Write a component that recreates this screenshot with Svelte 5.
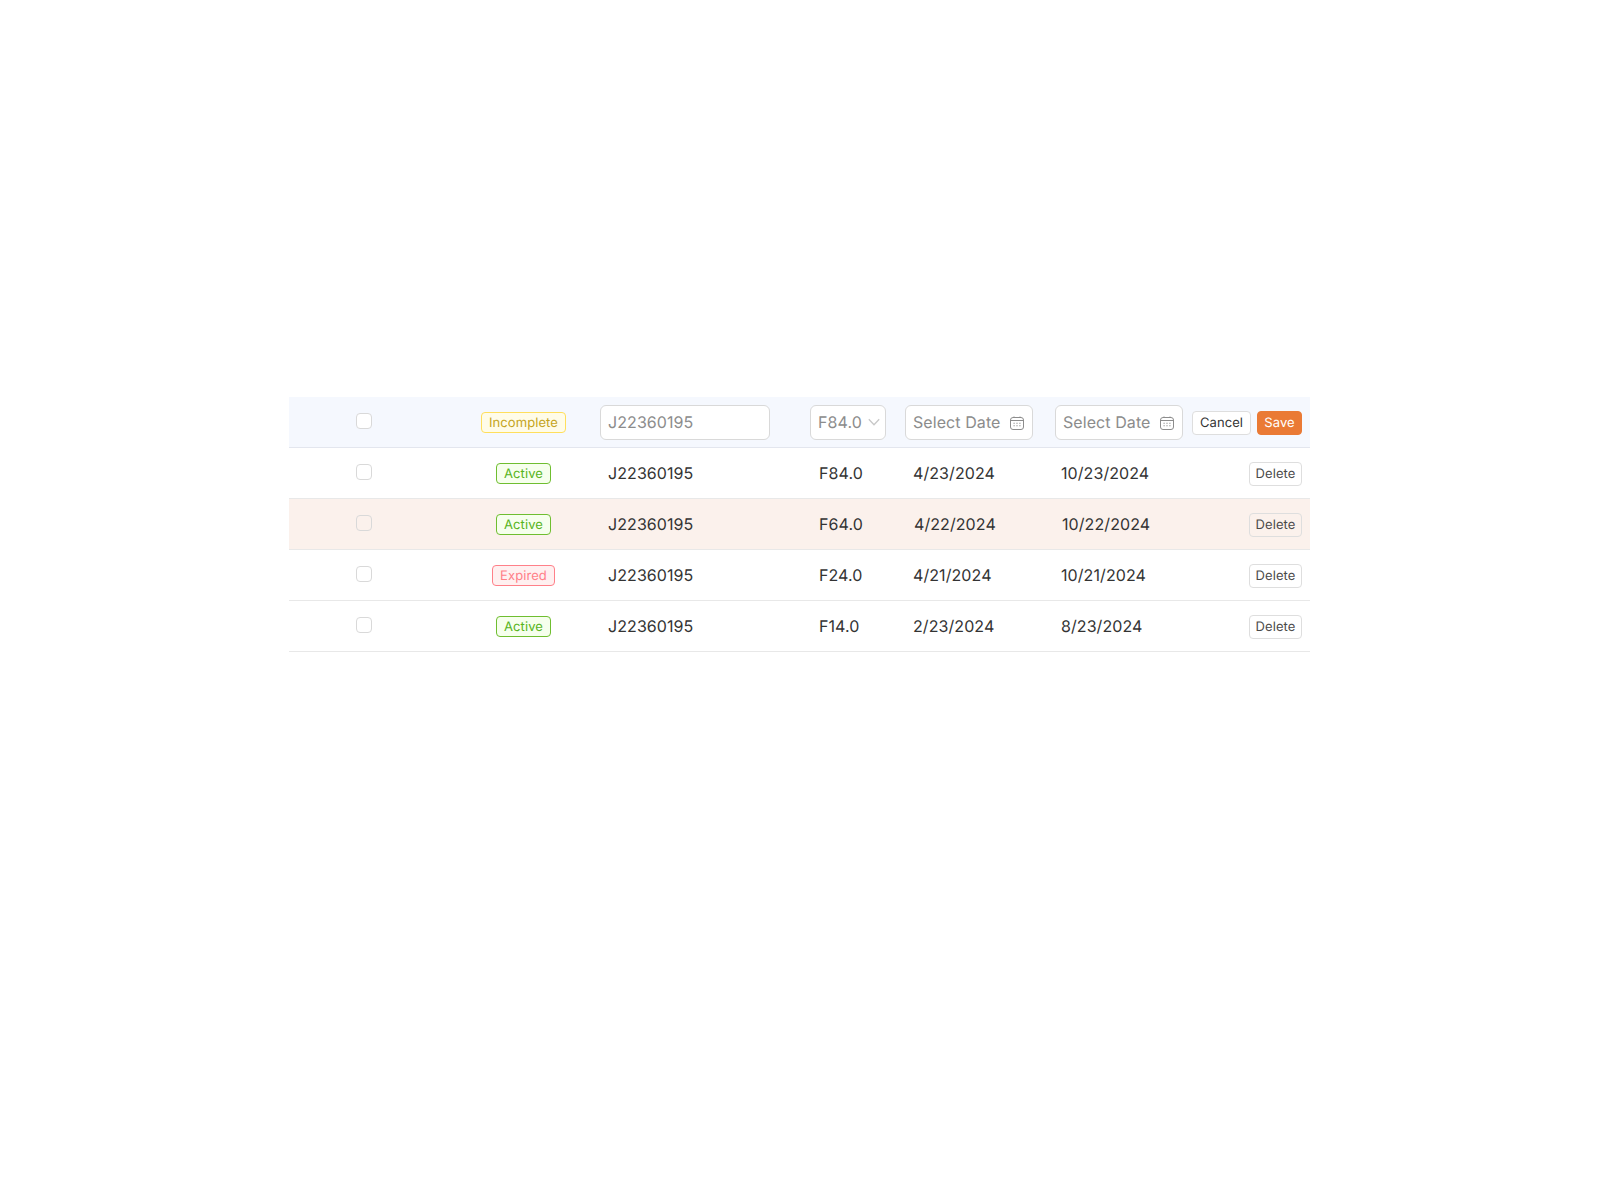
<script>
  const rows = [
    { status: 'Active', code: 'J22360195', grade: 'F84.0', start: '4/23/2024', end: '10/23/2024' },
    { status: 'Active', code: 'J22360195', grade: 'F64.0', start: '4/22/2024', end: '10/22/2024', hover: true },
    { status: 'Expired', code: 'J22360195', grade: 'F24.0', start: '4/21/2024', end: '10/21/2024' },
    { status: 'Active', code: 'J22360195', grade: 'F14.0', start: '2/23/2024', end: '8/23/2024' }
  ];
</script>

{#snippet calendar()}
  <svg class="cal" width="16" height="16" viewBox="0 0 16 16" fill="none" stroke="#8c8c8c" stroke-width="1">
    <rect x="1.5" y="2.5" width="13" height="12" rx="2.5" />
    <path d="M1.5 5.5h13M5 1.5v1M11 1.5v1" />
    <path d="M4.5 8.2h1.2M7.4 8.2h1.2M10.3 8.2h1.2M4.5 10.8h1.2M7.4 10.8h1.2M10.3 10.8h1.2" stroke-width="1.1" />
  </svg>
{/snippet}

<div class="table">
  <div class="row editing">
    <div class="cell"><span class="check"></span></div>
    <div class="cell center"><span class="badge incomplete">Incomplete</span></div>
    <div class="cell"><div class="field code">J22360195</div></div>
    <div class="cell">
      <div class="field grade">
        F84.0
        <svg width="12" height="12" viewBox="0 0 12 12" fill="none" stroke="#c8c8c8" stroke-width="1.3">
          <path d="M.8 3.2L6 8.8l5.2-5.6" />
        </svg>
      </div>
    </div>
    <div class="cell"><div class="field date">Select Date {@render calendar()}</div></div>
    <div class="cell"><div class="field date">Select Date {@render calendar()}</div></div>
    <div class="cell actions">
      <button class="btn cancel">Cancel</button>
      <button class="btn save">Save</button>
    </div>
  </div>

  {#each rows as row}
    <div class="row" class:hover={row.hover}>
      <div class="cell"><span class="check"></span></div>
      <div class="cell center">
        <span class="badge" class:active={row.status === 'Active'} class:expired={row.status === 'Expired'}>{row.status}</span>
      </div>
      <div class="cell text code-text">{row.code}</div>
      <div class="cell text grade-text">{row.grade}</div>
      <div class="cell text start-text">{row.start}</div>
      <div class="cell text end-text">{row.end}</div>
      <div class="cell actions"><button class="btn delete">Delete</button></div>
    </div>
  {/each}
</div>

<style>
  :global(body) {
    margin: 0;
    background: #fff;
  }

  .table {
    width: 1021px;
    margin: 397px 0 0 289px;
    font-family: Inter, "Liberation Sans", sans-serif;
    font-weight: 370;
    color: #333;
    letter-spacing: 0.08px;
    text-rendering: geometricPrecision;
  }

  .row {
    display: grid;
    grid-template-columns: 158px 153px 210px 95px 150px 137px 118px;
    align-items: center;
    height: 51px;
    box-sizing: border-box;
    border-bottom: 1px solid #e8e8e8;
    font-size: 16px;
  }

  .row.editing {
    background: #f5f8fe;
    border-bottom-color: #e3e6ee;
  }

  .row.hover {
    background: #fbf1ec;
  }

  .cell {
    display: flex;
    align-items: center;
    min-width: 0;
  }

  .center {
    justify-content: center;
  }

  .check {
    width: 16px;
    height: 16px;
    box-sizing: border-box;
    margin: -2px 0 0 67px;
    border: 1px solid #d9d9d9;
    border-radius: 4px;
    background: #fff;
  }

  .hover .check {
    background: transparent;
  }

  .badge {
    box-sizing: border-box;
    height: 21px;
    padding: 0 7px;
    border: 1px solid;
    border-radius: 4px;
    font-size: 13px;
    line-height: 20px;
    white-space: nowrap;
  }

  .badge.incomplete {
    color: #c4a41c;
    background: #fffce8;
    border-color: #ffdf5c;
  }

  .badge.active {
    color: #58b41c;
    background: #f6ffed;
    border-color: #6fbe30;
  }

  .badge.expired {
    color: #ff7f88;
    background: #fff0f0;
    border-color: #ff8089;
  }

  .field {
    display: flex;
    align-items: center;
    justify-content: space-between;
    box-sizing: border-box;
    height: 35px;
    padding: 0 8px 0 7px;
    border: 1px solid #d9d9d9;
    border-radius: 6px;
    background: #fff;
    color: #8c8c8c;
    white-space: nowrap;
  }

  .code {
    width: 170px;
  }

  .grade {
    width: 76px;
    padding-right: 5px;
  }

  .date {
    width: 128px;
  }

  .cal {
    margin: 2px -1px 0 0;
  }

  .text {
    white-space: nowrap;
  }

  .code-text {
    padding-left: 8px;
  }

  .grade-text {
    padding-left: 9px;
  }

  .start-text {
    padding-left: 8px;
  }

  .end-text {
    padding-left: 6px;
  }

  .hover .start-text,
  .hover .end-text {
    transform: translateX(1px);
  }

  .actions {
    justify-content: flex-end;
    gap: 6px;
    padding-right: 8px;
  }

  .btn {
    box-sizing: border-box;
    height: 24px;
    padding: 1px 0 0;
    margin-top: 1px;
    border: 1px solid #dedede;
    border-radius: 4px;
    background: #fff;
    color: #333;
    font-family: inherit;
    font-size: 13px;
    font-weight: 370;
    letter-spacing: 0.08px;
    line-height: 21px;
    text-rendering: geometricPrecision;
  }

  .btn.cancel {
    width: 59px;
  }

  .btn.save {
    width: 45px;
    background: #ea7a35;
    border-color: #ea7a35;
    color: #fff;
  }

  .btn.delete {
    width: 53px;
    color: #4a4a4a;
  }

  .hover .btn.delete {
    background: transparent;
  }
</style>
